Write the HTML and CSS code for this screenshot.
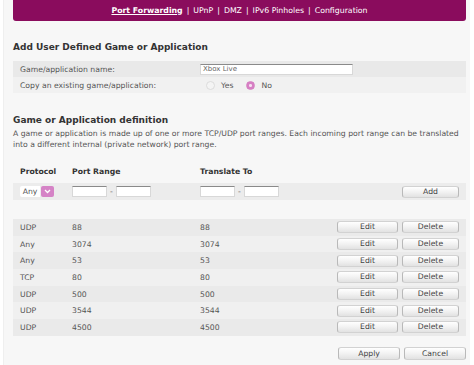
FILE: index.html
```html
<!DOCTYPE html>
<html>
<head>
<meta charset="utf-8">
<link rel="stylesheet" href="styles.css">
</head>
<body>
<div class="page">
  <div class="nav">
    <a class="nav-link active">Port Forwarding</a><span class="sep">|</span>
    <a class="nav-link">UPnP</a><span class="sep">|</span>
    <a class="nav-link">DMZ</a><span class="sep">|</span>
    <a class="nav-link">IPv6 Pinholes</a><span class="sep">|</span>
    <a class="nav-link">Configuration</a>
  </div>

  <h2 class="title first">Add User Defined Game or Application</h2>
  <div class="form-box">
    <div class="form-row dark">
      <span class="label">Game/application name:</span>
      <span class="field"><span class="text-input wide">Xbox Live</span></span>
    </div>
    <div class="form-row">
      <span class="label">Copy an existing game/application:</span>
      <span class="field radios">
        <span class="radio"></span><span class="radio-label">Yes</span>
        <span class="radio checked"></span><span class="radio-label">No</span>
      </span>
    </div>
  </div>

  <h2 class="title second">Game or Application definition</h2>
  <p class="desc">A game or application is made up of one or more TCP/UDP port ranges. Each incoming port range can be translated<br>into a different internal (private network) port range.</p>

  <div class="grid head">
    <span>Protocol</span><span>Port Range</span><span>Translate To</span><span></span><span></span>
  </div>
  <div class="grid entry">
    <span class="select"><span class="select-val">Any</span><span class="select-arrow"><svg width="7" height="5" viewBox="0 0 7 5"><path d="M1 1 L3.5 3.5 L6 1" fill="none" stroke="#fff" stroke-width="1.3"/></svg></span></span>
    <span class="range"><span class="text-input small"></span><span class="dash">-</span><span class="text-input small"></span></span>
    <span class="range"><span class="text-input small"></span><span class="dash">-</span><span class="text-input small"></span></span>
    <span></span>
    <span class="btn">Add</span>
  </div>

  <div class="rows">
    <div class="grid row odd"><span>UDP</span><span>88</span><span>88</span><span class="btn">Edit</span><span class="btn">Delete</span></div>
    <div class="grid row"><span>Any</span><span>3074</span><span>3074</span><span class="btn">Edit</span><span class="btn">Delete</span></div>
    <div class="grid row odd"><span>Any</span><span>53</span><span>53</span><span class="btn">Edit</span><span class="btn">Delete</span></div>
    <div class="grid row"><span>TCP</span><span>80</span><span>80</span><span class="btn">Edit</span><span class="btn">Delete</span></div>
    <div class="grid row odd"><span>UDP</span><span>500</span><span>500</span><span class="btn">Edit</span><span class="btn">Delete</span></div>
    <div class="grid row"><span>UDP</span><span>3544</span><span>3544</span><span class="btn">Edit</span><span class="btn">Delete</span></div>
    <div class="grid row odd"><span>UDP</span><span>4500</span><span>4500</span><span class="btn">Edit</span><span class="btn">Delete</span></div>
  </div>

  <div class="actions">
    <span class="btn">Apply</span><span class="btn">Cancel</span>
  </div>
</div>
</body>
</html>
```
FILE: styles.css
```css
html, body {
  margin: 0;
  padding: 0;
  background: #ffffff;
}
body {
  font-family: "DejaVu Sans", Verdana, sans-serif;
  font-size: 7.7px;
  color: #555;
  width: 474px;
  height: 365px;
  overflow: hidden;
}
.page {
  margin-left: 3px;
  width: 467px;
  height: 365px;
  background: #f7f7f7;
  border-left: 1px solid #efefef;
  box-sizing: border-box;
  padding-left: 9px;
  padding-right: 4px;
}
.nav {
  height: 21px;
  background: #8a0c5d;
  border-radius: 0 0 3px 3px;
  display: flex;
  justify-content: center;
  align-items: center;
  color: #fff;
  font-size: 7.8px;
  padding-bottom: 1px;
  box-sizing: border-box;
}
.nav-link {
  color: #fff;
  text-decoration: none;
}
.nav-link.active {
  font-weight: bold;
  text-decoration: underline;
}
.sep {
  margin: 0 4px;
}
.title {
  margin: 0;
  font-size: 9px;
  font-weight: bold;
  color: #333;
  line-height: 14px;
}
.title.first {
  margin-top: 19px;
}
.title.second {
  margin-top: 20px;
}
.form-box {
  margin-top: 7px;
}
.form-row {
  display: flex;
  align-items: center;
  height: 16px;
  padding-left: 7px;
  background: #f1f1f1;
}
.form-row.dark {
  background: #e9e9e9;
}
.label {
  width: 180px;
}
.field {
  display: flex;
  align-items: center;
}
.text-input {
  display: inline-block;
  background: #fff;
  border: 1px solid #d8d8d8;
  border-top: 1px solid #8a8a8a;
  height: 9px;
  box-sizing: content-box;
  line-height: 9px;
  font-size: 7px;
  color: #666;
  padding-left: 2px;
}
.text-input.wide {
  width: 149px;
}
.text-input.small {
  width: 31px;
}
.radios {
  padding-left: 6px;
}
.radio {
  display: inline-block;
  width: 7px;
  height: 7px;
  border-radius: 50%;
  border: 1px solid #dcdcdc;
  background: #f4f4f4;
}
.radio.checked {
  border: 1px solid #d57fc2;
  background: radial-gradient(circle, #f6e0f0 0, #f6e0f0 1.2px, #d77fc4 1.8px);
}
.radio-label {
  margin-left: 6px;
  margin-right: 13px;
  color: #555;
}
.desc {
  margin: 1px 0 0 0;
  line-height: 11px;
  font-size: 7.7px;
  color: #555;
  white-space: nowrap;
}
.grid {
  display: grid;
  grid-template-columns: 52px 128px 1fr 61px 61px;
  align-items: center;
  padding-left: 7px;
  padding-right: 7px;
}
.grid > :nth-child(5) {
  margin-left: 4px;
}
.head {
  margin-top: 15px;
  line-height: 14px;
  font-weight: bold;
  color: #333;
}
.entry {
  margin-top: 4px;
  height: 17px;
  background: #ececec;
}
.select {
  display: inline-flex;
  align-items: center;
  width: 35px;
  height: 11px;
}
.select-val {
  background: #fff;
  height: 11px;
  line-height: 11px;
  width: 20px;
  text-align: center;
  color: #555;
  border-radius: 2px 0 0 2px;
}
.select-arrow {
  width: 13px;
  height: 11px;
  background: #d583c6;
  border-radius: 2px;
  margin-left: 1px;
  display: flex;
  align-items: center;
  justify-content: center;
}
.range {
  display: flex;
  align-items: center;
}
.dash {
  width: 9px;
  text-align: center;
  color: #666;
}
.rows {
  margin-top: 19px;
}
.row {
  height: 16.7px;
  background: #f0f0f0;
}
.row.odd {
  background: #eaeaea;
}
.btn {
  display: block;
  height: 10px;
  line-height: 10px;
  text-align: center;
  color: #444;
  background: linear-gradient(#ffffff, #f2f2f2 50%, #e2e2e2);
  border: 1px solid #d2d2d2;
  border-left-color: #b9b9b9;
  border-right-color: #b9b9b9;
  border-radius: 3px;
}
.actions {
  margin-top: 11px;
  display: flex;
  justify-content: flex-end;
  gap: 4px;
}
.actions .btn {
  width: 60px;
  height: 11px;
  line-height: 11px;
}
```
